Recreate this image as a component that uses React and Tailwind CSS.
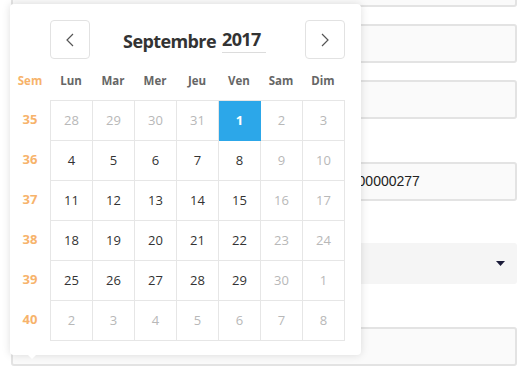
import React from "react";

const weeks = [
  { n: 35, days: [[28, 0], [29, 0], [30, 0], [31, 0], [1, 2], [2, 0], [3, 0]] },
  { n: 36, days: [[4, 1], [5, 1], [6, 1], [7, 1], [8, 1], [9, 0], [10, 0]] },
  { n: 37, days: [[11, 1], [12, 1], [13, 1], [14, 1], [15, 1], [16, 0], [17, 0]] },
  { n: 38, days: [[18, 1], [19, 1], [20, 1], [21, 1], [22, 1], [23, 0], [24, 0]] },
  { n: 39, days: [[25, 1], [26, 1], [27, 1], [28, 1], [29, 1], [30, 0], [1, 0]] },
  { n: 40, days: [[2, 0], [3, 0], [4, 0], [5, 0], [6, 0], [7, 0], [8, 0]] },
];

const heads = ["Lun", "Mar", "Mer", "Jeu", "Ven", "Sam", "Dim"];

function Field({ className = "", children }) {
  return (
    <div
      className={
        "h-[39px] w-[506px] rounded-[3px] border-2 border-[#e3e3e3] bg-[#fafafa] flex items-center " +
        className
      }
    >
      {children}
    </div>
  );
}

export default function App() {
  return (
    <div
      className="relative w-[524px] h-[378px] overflow-hidden bg-white"
      style={{ fontFamily: "'Liberation Sans', Arial, sans-serif" }}
    >
      {/* background form */}
      <div className="flex flex-col pl-[11px]">
        <Field className="mt-[-32px]" />
        <Field className="mt-[17px]" />
        <Field className="mt-[17px]" />
        <Field className="mt-[43px]">
          <span className="pl-[329px] text-[14px] text-[#222]">0000000277</span>
        </Field>
        <div className="mt-[42px] h-[41px] w-[506px] rounded-[3px] bg-[#f5f5f5] flex items-center justify-end pr-[12px]">
          <svg width="9" height="5" viewBox="0 0 9 5">
            <path d="M0 0 H9 L4.5 5 Z" fill="#1b1c3a" />
          </svg>
        </div>
        <Field className="mt-[43px]" />
      </div>

      {/* datepicker popup */}
      <div
        className="absolute left-[10px] top-[4px] w-[351px] h-[351px] rounded-[4px] bg-white shadow-[0_0_8px_rgba(0,0,0,0.13)]"
        style={{ fontFamily: "'Open Sans', 'Noto Sans', sans-serif" }}
      >
        <div className="absolute left-[18px] bottom-[-4px] w-0 h-0 border-l-[4px] border-r-[4px] border-t-[4px] border-l-transparent border-r-transparent border-t-white" />
        <div className="pt-[16px] pl-[40px] pr-[16px] flex items-center justify-between">
          <button className="w-[40px] h-[39px] rounded-[4px] border border-[#e2e2e2] flex items-center justify-center">
            <svg width="8" height="14" viewBox="0 0 8 14">
              <path d="M7 1 L1 7 L7 13" fill="none" stroke="#555" strokeWidth="1.2" />
            </svg>
          </button>
          <div className="flex items-end text-[18px] font-bold text-[#333] tracking-[-0.6px] leading-[24px] pr-[6px]">
            <span>Septembre</span>
            <span className="ml-[6px] w-[44px] border-b border-[#dcdcdc] pb-[1px]">2017</span>
          </div>
          <button className="w-[40px] h-[39px] rounded-[4px] border border-[#e2e2e2] flex items-center justify-center">
            <svg width="8" height="14" viewBox="0 0 8 14">
              <path d="M1 1 L7 7 L1 13" fill="none" stroke="#555" strokeWidth="1.2" />
            </svg>
          </button>
        </div>
        <div className="flex h-[41px] pt-[3px] items-center text-[11.5px] font-bold">
          <div className="w-[40px] text-center text-[#f7b36b]">Sem</div>
          {heads.map((h) => (
            <div key={h} className="w-[42px] text-center text-[#666]">
              {h}
            </div>
          ))}
        </div>
        <div className="flex">
          <div className="w-[40px] flex flex-col">
            {weeks.map((w) => (
              <div
                key={w.n}
                className="h-[40px] flex items-center justify-center text-[13px] font-bold text-[#f7b36b]"
              >
                {w.n}
              </div>
            ))}
          </div>
          <div className="grid grid-cols-[repeat(7,42px)] border-l border-t border-[#e6e6e6]">
            {weeks.map((w) =>
              w.days.map(([d, s], i) => (
                <div
                  key={w.n + "-" + i}
                  className={
                    "h-[40px] flex items-center justify-center border-r border-b text-[13px] " +
                    (s === 2
                      ? "bg-[#2ca7e9] border-[#2ca7e9] text-white font-bold"
                      : s === 1
                      ? "border-[#e6e6e6] text-[#333]"
                      : "border-[#e6e6e6] text-[#b8b8b8]")
                  }
                >
                  {d}
                </div>
              ))
            )}
          </div>
        </div>
      </div>
    </div>
  );
}
